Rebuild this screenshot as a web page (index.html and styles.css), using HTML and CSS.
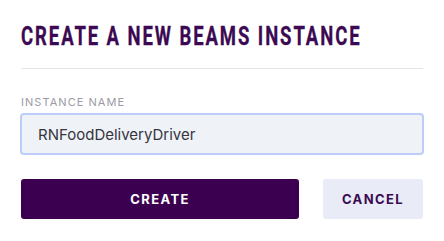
FILE: index.html
```html
<!DOCTYPE html>
<html>
<head>
<meta charset="utf-8">
<link rel="stylesheet" href="styles.css">
</head>
<body>
<div class="dialog">
  <h1 class="title">CREATE A NEW BEAMS INSTANCE</h1>
  <div class="divider"></div>
  <label class="label" for="name">INSTANCE NAME</label>
  <input class="input" id="name" type="text" value="RNFoodDeliveryDriver">
  <div class="actions">
    <button class="btn btn-primary">CREATE</button>
    <button class="btn btn-secondary">CANCEL</button>
  </div>
</div>
</body>
</html>
```
FILE: styles.css
```css
html, body {
  margin: 0;
  padding: 0;
  background: #ffffff;
}
.dialog {
  width: 444px;
  height: 241px;
  box-sizing: border-box;
  padding: 24px 21px 0 21px;
  display: flex;
  flex-direction: column;
  align-items: stretch;
  font-family: Inter, "Liberation Sans", sans-serif;
}
.title {
  align-self: flex-start;
  width: max-content;
  margin: 0;
  font-family: Roboto, "Liberation Sans", sans-serif;
  font-weight: 700;
  font-size: 25px;
  line-height: 26px;
  letter-spacing: 2.6px;
  white-space: nowrap;
  color: #3b0a52;
  -webkit-text-stroke: 0.3px #3b0a52;
  transform: scaleX(0.74);
  transform-origin: left center;
}
.divider {
  height: 1px;
  background: #e3e3e8;
  margin-top: 18px;
}
.label {
  margin-top: 27px;
  font-size: 11px;
  line-height: 13px;
  letter-spacing: 1.05px;
  color: #9b9aa6;
}
.input {
  margin: 4px -1px 0 -1px;
  height: 42px;
  box-sizing: border-box;
  border: 2px solid #bccdfa;
  border-radius: 4px;
  background: #eff3f8;
  padding: 0 16px;
  font-family: Inter, "Liberation Sans", sans-serif;
  font-size: 15px;
  color: #36353d;
  outline: none;
}
.actions {
  display: flex;
  gap: 24px;
  margin-top: 24px;
}
.btn {
  height: 40px;
  border: none;
  border-radius: 3px;
  font-family: Inter, "Liberation Sans", sans-serif;
  font-weight: 700;
  font-size: 13px;
  letter-spacing: 1.4px;
  padding: 0;
}
.btn-primary {
  flex: 1;
  background: #3c0050;
  color: #ffffff;
}
.btn-secondary {
  width: 100px;
  background: #e9ebf6;
  color: #3b0a52;
}
```
